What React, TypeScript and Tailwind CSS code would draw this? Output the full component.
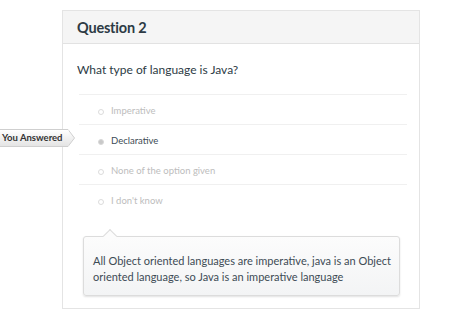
import React from "react";

const options = [
  { label: "Imperative", selected: false },
  { label: "Declarative", selected: true },
  { label: "None of the option given", selected: false },
  { label: "I don't know", selected: false },
];

export default function App() {
  return (
    <div
      className="relative w-[474px] h-[319px] bg-white overflow-hidden"
      style={{ fontFamily: "Lato, 'Open Sans', sans-serif" }}
    >
      <div className="absolute left-[62px] top-[10px] w-[358px] h-[299px] border border-[#e4e4e4] bg-white flex flex-col">
        <div className="h-[33px] bg-[#f5f5f5] border-b border-[#e2e2e2] flex items-center pl-[14px] pt-[1px]">
          <span className="text-[14.5px] font-bold text-[#2d3b45] tracking-[-0.2px]">Question 2</span>
        </div>
        <div className="pl-[14px] pt-[18px] text-[12px] text-[#2d3b45] leading-[16px]">
          What type of language is Java?
        </div>
        <div className="mt-[16px] ml-[16px] mr-[12px] flex flex-col">
          {options.map((o) => (
            <div key={o.label} className="h-[30px] border-t border-[#f0f0f0] flex items-center pl-[19px] pt-[4px]">
              <span
                className={
                  o.selected
                    ? "w-[6px] h-[6px] rounded-full bg-[#c8c8c8] border border-[#d8d8d8]"
                    : "w-[6px] h-[6px] rounded-full border border-[#dcdcdc]"
                }
              />
              <span
                className={
                  o.selected
                    ? "ml-[7px] text-[9.5px] text-[#3d4b55]"
                    : "ml-[7px] text-[9.5px] text-[#bdbdbd]"
                }
              >
                {o.label}
              </span>
            </div>
          ))}
        </div>
        <div className="relative mt-[22px] ml-[20px] w-[317px] h-[60px] rounded-[3px] border border-[#dcdcdc] bg-gradient-to-b from-[#fcfcfc] to-[#f3f4f5] shadow-[0_1px_2px_rgba(0,0,0,0.12)] pt-[16px] pl-[9px]">
          <div className="absolute left-[21px] top-[-6px] w-[10px] h-[10px] rotate-45 bg-[#fcfcfc] border-l border-t border-[#dcdcdc]" />
          <p className="text-[11px] leading-[16px] text-[#3d4b55]">
            All Object oriented languages are imperative, java is an Object oriented language, so Java is an imperative language
          </p>
        </div>
      </div>
      <div className="absolute left-[-1px] top-[129px] h-[18px] flex items-center">
        <div className="h-[18px] pl-[2px] pr-[5px] flex items-center whitespace-nowrap bg-gradient-to-b from-[#ffffff] to-[#e4e4e4] border-y border-l border-[#cfcfcf] text-[9.5px] font-bold text-[#333]">
          You Answered
        </div>
        <svg width="8" height="18" viewBox="0 0 8 18" className="-ml-px">
          <defs>
            <linearGradient id="g" x1="0" y1="0" x2="0" y2="1">
              <stop offset="0" stopColor="#ffffff" />
              <stop offset="1" stopColor="#e4e4e4" />
            </linearGradient>
          </defs>
          <path d="M0 0.5 L1 0.5 L7.5 9 L1 17.5 L0 17.5 Z" fill="url(#g)" stroke="#cfcfcf" strokeWidth="1" />
          <rect x="0" y="1" width="1.5" height="16" fill="url(#g)" />
        </svg>
      </div>
    </div>
  );
}
